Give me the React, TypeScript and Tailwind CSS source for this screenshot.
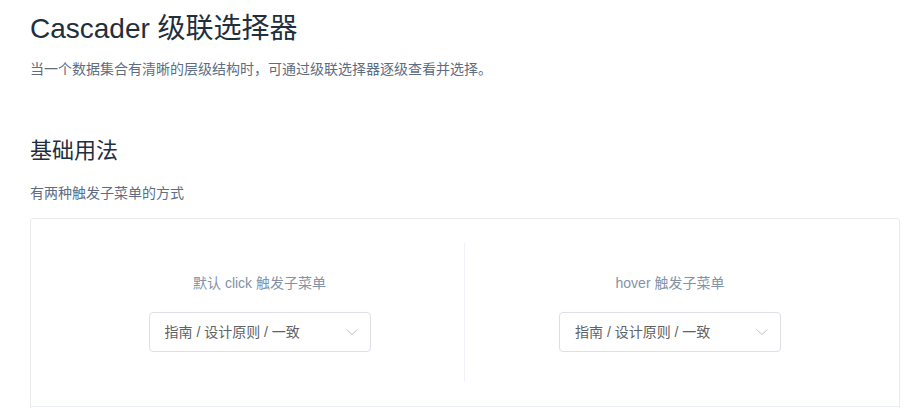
import React from "react";

const ArrowDown = () => (
  <svg width="14" height="14" viewBox="0 0 14 14" fill="none" className="text-[#c0c4cc]">
    <path d="M1.5 4.5 L7 9.5 L12.5 4.5" stroke="currentColor" strokeWidth="1" />
  </svg>
);

const CascaderInput = ({ value }: { value: string }) => (
  <div className="w-[222px] h-10 mx-auto flex items-center justify-between border border-[#dcdfe6] rounded-[4px] bg-white pl-[15px] pr-[11px] text-left">
    <span className="text-sm text-[#606266] leading-5">{value}</span>
    <ArrowDown />
  </div>
);

const DemoBlock = ({ label, last }: { label: string; last?: boolean }) => (
  <div
    className={`w-1/2 pt-[30px] pb-[30px] text-center ${last ? "" : "border-r border-[#eff2f6]"}`}
  >
    <span className="block text-sm leading-5 text-[#8492a6] mb-[19px]">{label}</span>
    <CascaderInput value="指南 / 设计原则 / 一致" />
  </div>
);

const App = () => {
  return (
    <div
      className="min-h-screen bg-white pl-[30px] pr-[6px] pt-[9px]"
      style={{ fontFamily: '"Liberation Sans", "Noto Sans CJK SC", sans-serif' }}
    >
      {/* Page title */}
      <h2 className="text-[28px] leading-10 font-normal text-[#1f2f3d]">Cascader 级联选择器</h2>
      <p className="mt-[10px] text-sm leading-5 text-[#5e6d82]">
        当一个数据集合有清晰的层级结构时，可通过级联选择器逐级查看并选择。
      </p>

      {/* Section: basic usage */}
      <h3 className="mt-[57px] text-[22px] leading-[30px] font-normal text-[#1f2f3d]">基础用法</h3>
      <p className="mt-[17px] text-sm leading-5 text-[#5e6d82]">有两种触发子菜单的方式</p>

      <div className="mt-[15px] w-[870px] border border-[#ebebeb] rounded-[3px]">
        <div className="p-6 flex">
          <DemoBlock label="默认 click 触发子菜单" />
          <DemoBlock label="hover 触发子菜单" last />
        </div>
        <div className="h-11 border-t border-[#eaeefb]"></div>
      </div>
    </div>
  );
};

export default App;
